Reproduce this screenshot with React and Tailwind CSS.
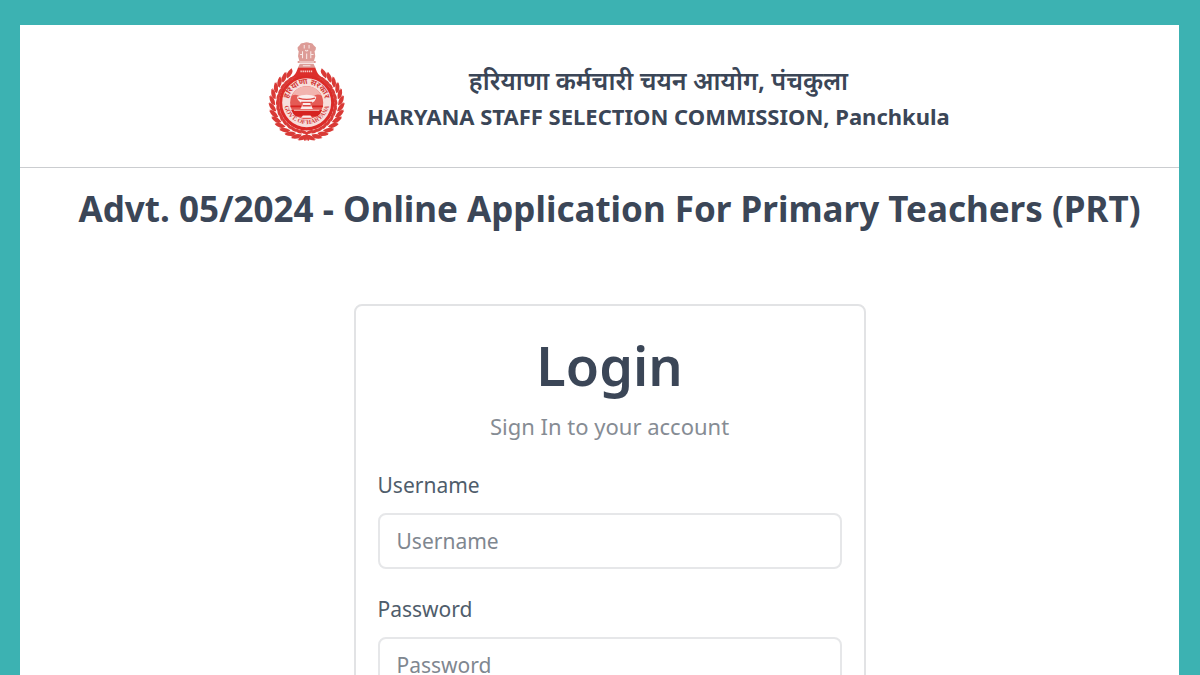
import React from 'react';

const leafAngles = Array.from({ length: 14 }, (_, i) => 29 + i * 11.1);

const WreathSide = () => (
  <g>
    {leafAngles.map((a) => (
      <g key={a} transform={`rotate(${-a} 149 199)`}>
        <path d="M135 109 q-1 -16 25 -20 q1 17 -25 20z" />
        <path d="M135 112 q9 12 26 7 q-10 -13 -26 -7z" />
        <path d="M131 105 q-1 -11 11 -15 q0 9 -11 15z" opacity="0.6" />
      </g>
    ))}
  </g>
);

const Emblem = () => (
  <svg viewBox="36 21 228 290" className="h-[100px] w-20 shrink-0" role="img" aria-label="Government of Haryana">
    {/* lion capital */}
    <g fill="#dd9c97">
      <path d="M128 31 q4 -8 12 -7 q9 -5 18 0 q8 -1 12 7 l6 6 q0 8 -4 11 l2 14 l-4 15 h-42 l-4 -15 l2 -14 q-4 -4 -3 -12z" />
      <path d="M123 76 h52 v6 h-52z M129 84 h40 l6 13 h-52z" />
    </g>
    <g fill="none" stroke="#f8e8e6" strokeWidth="3">
      <path d="M142 30 v10 M156 30 v10 M137 48 v20 M145 44 q4 6 8 0 M149 54 v16 M161 48 v20 M130 57 h7 M161 57 h8" />
      <path d="M128 79 h42 M138 90 h22" />
    </g>
    <path d="M124 96 h50 l5 12 q6 14 27 22 l-57 -4 l-57 4 q21 -8 27 -22z" fill="#dc2f2c" />
    <path d="M131 106 h36" stroke="#f6cfcb" strokeWidth="5" strokeDasharray="4 2" />

    {/* wreath */}
    <g fill="#d93a36">
      <WreathSide />
      <g transform="translate(298 0) scale(-1 1)">
        <WreathSide />
      </g>
    </g>
    <path d="M137 296 l12 -9 l12 9 l-6 12 l-6 -7 l-6 7z" fill="#d93a36" />

    {/* medallion */}
    <circle cx="149" cy="198" r="80" fill="#db2b28" />
    <circle cx="149" cy="197" r="71" fill="#f7dedb" />
    <circle cx="149" cy="197" r="48" fill="#e45b55" />
    <path d="M106 176 a48 48 0 0 1 86 0 q-14 -7 -24 4 q-18 -9 -38 0 q-10 -10 -24 -4z" fill="#f2b3ae" />
    <path d="M121 180 q28 -12 56 0 q-2 16 -18 19 l8 16 h-36 l8 -16 q-16 -4 -18 -19z" fill="#fbeceb" />
    <path d="M125 184 q24 7 48 0 M133 196 h32 M137 206 h24" fill="none" stroke="#dc4540" strokeWidth="4" />
    <path d="M102 205 h31 v5 h-31z M165 205 h31 v5 h-31z M104 218 h90 q-5 12 -14 19 h-62 q-9 -7 -14 -19z" fill="#d62320" />
    <path d="M112 219 h74" stroke="#f4c6c2" strokeWidth="3" />
    <path d="M138 234 h22 l5 7 h-32z" fill="#fbeceb" />

    <path id="ring-top" d="M98 215 a54 54 0 1 1 102 0" fill="none" />
    <path id="ring-bottom" d="M83 193 a66 66 0 0 0 132 0" fill="none" />
    <text fontSize="23" fontWeight="700" fill="#d4403b" textAnchor="middle" fontFamily="Noto Sans, sans-serif">
      <textPath href="#ring-top" startOffset="50%">हरियाणा सरकार</textPath>
    </text>
    <text fontSize="18" fontWeight="700" fill="#d4403b" textAnchor="middle" fontFamily="Liberation Serif, serif">
      <textPath href="#ring-bottom" startOffset="50%">GOVT. OF HARYANA</textPath>
    </text>
  </svg>
);

const Field = ({ id, label, type }) => (
  <div>
    <label htmlFor={id} className="mb-3 block leading-8 text-[#4f5d6b]">
      {label}
    </label>
    <input
      id={id}
      type={type}
      placeholder={label}
      className="block h-14 w-full rounded-lg border-2 border-[#e6e7e9] bg-white px-[17px] text-[#4f5d6b] placeholder:text-[#7f8790]"
    />
  </div>
);

const App = () => {
  return (
    <div className="min-h-screen bg-[#3cb2b2] pt-[25px] pr-[21px] pl-5 font-['Noto_Sans',sans-serif] text-[#3b4657]">
      <div className="bg-white pb-12">
        <header className="flex items-end justify-center gap-4 border-b border-[#cbcdd0] pt-[17px] pb-[25px] pl-[22px]">
          <Emblem />
          <div className="px-1 pb-2 text-center text-[22px] leading-9 font-bold">
            <p className="text-[25px] leading-9 font-semibold">हरियाणा कर्मचारी चयन आयोग, पंचकुला</p>
            <p>HARYANA STAFF SELECTION COMMISSION, Panchkula</p>
          </div>
        </header>

        <main className="pt-[17px] pl-5">
          <h1 className="text-center text-[35px] leading-[48px] font-bold">
            Advt. 05/2024 - Online Application For Primary Teachers (PRT)
          </h1>

          <form className="mx-auto mt-[71px] max-w-lg rounded-lg border-2 border-[#e2e3e5] px-[22px] pt-[23px] pb-8 text-[21px]">
            <h2 className="text-center text-[54px] leading-[72px] font-semibold">Login</h2>
            <p className="mt-[9px] text-center text-[22px] leading-8 text-[#868c94]">Sign In to your account</p>
            <div className="mt-[27px] flex flex-col gap-6">
              <Field id="username" label="Username" type="text" />
              <Field id="password" label="Password" type="password" />
            </div>
          </form>
        </main>
      </div>
    </div>
  );
};

export default App;
